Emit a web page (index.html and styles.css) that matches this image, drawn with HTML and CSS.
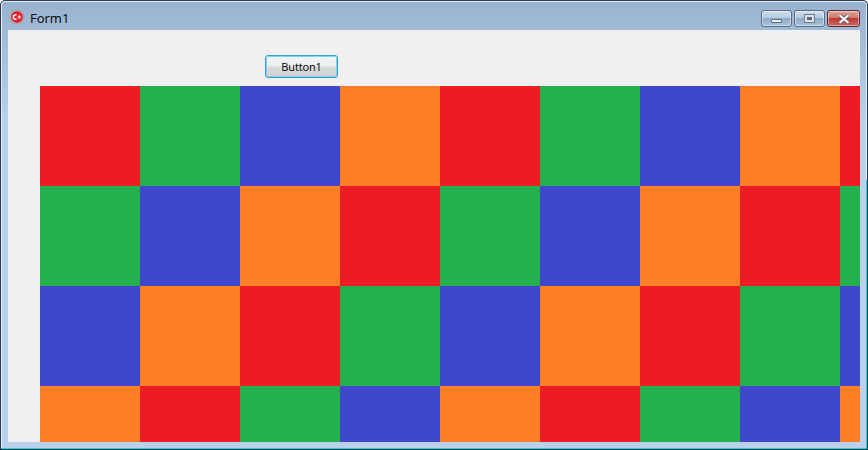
FILE: index.html
```html
<!DOCTYPE html>
<html lang="en">
<head>
<meta charset="utf-8">
<title>Form1</title>
<link rel="stylesheet" href="styles.css">
</head>
<body>
<div class="window">
  <header class="titlebar">
    <svg class="app-icon" width="16" height="16" viewBox="0 0 16 16">
      <circle cx="8" cy="8" r="7.5" fill="#a9a4ab"/>
      <circle cx="8" cy="8" r="5.8" fill="#e81c2c"/>
      <path d="M7.6 5.9A2.3 2.3 0 1 0 7.6 10.1" fill="none" stroke="#fff" stroke-width="1.5"/>
      <path d="M8.6 8h3.6M10.4 6.3v3.4" stroke="#fff" stroke-width="1.1"/>
    </svg>
    <span class="title">Form1</span>
    <div class="controls">
      <div class="ctl ctl-min"><span class="min-glyph"></span></div>
      <div class="ctl ctl-max"><span class="max-glyph"></span></div>
      <div class="ctl ctl-close">
        <svg width="12" height="10" viewBox="0 0 12 10">
          <path d="M1.5 1.2L10.5 8.8M10.5 1.2L1.5 8.8" fill="none" stroke="#4b4550" stroke-width="3.6"/>
          <path d="M1.5 1.2L10.5 8.8M10.5 1.2L1.5 8.8" fill="none" stroke="#f1eff0" stroke-width="2.4"/>
        </svg>
      </div>
    </div>
  </header>
  <main class="client">
    <div class="toolbar"><button class="btn" type="button">Button1</button></div>
    <div class="board">
      <i class="r"></i><i class="g"></i><i class="b"></i><i class="o"></i><i class="r"></i><i class="g"></i><i class="b"></i><i class="o"></i><i class="r"></i>
      <i class="g"></i><i class="b"></i><i class="o"></i><i class="r"></i><i class="g"></i><i class="b"></i><i class="o"></i><i class="r"></i><i class="g"></i>
      <i class="b"></i><i class="o"></i><i class="r"></i><i class="g"></i><i class="b"></i><i class="o"></i><i class="r"></i><i class="g"></i><i class="b"></i>
      <i class="o"></i><i class="r"></i><i class="g"></i><i class="b"></i><i class="o"></i><i class="r"></i><i class="g"></i><i class="b"></i><i class="o"></i>
    </div>
  </main>
</div>
</body>
</html>
```
FILE: styles.css
```css
html, body { margin: 0; height: 100%; background: #fff; overflow: hidden; }
.window {
  box-sizing: border-box;
  width: 868px;
  height: 450px;
  display: flex;
  flex-direction: column;
  border: 1px solid #2b3a44;
  border-bottom-color: #22303a;
  border-radius: 5px 5px 0 0;
  background: linear-gradient(#98b3d0 0, #b9d1ea 120px, #b9d1ea 100%);
  box-shadow: inset 0 0 0 1px #e4eef7;
  padding: 0 7px 7px 7px;
  position: relative;
}
.window::after {
  content: "";
  position: absolute;
  left: 0; right: 0; bottom: 0;
  height: 1px;
  background: #1fd3e6;
}
.window::before {
  content: "";
  position: absolute;
  top: 40%; right: 0; bottom: 0;
  width: 1px;
  background: #1fd3e6;
}
.titlebar {
  height: 29px;
  flex: none;
  display: flex;
  align-items: center;
  font: 13px "Open Sans", "Noto Sans", sans-serif;
  color: #000;
}
.app-icon { margin: 3px 5px 0 1px; }
.title { padding-top: 4px; }
.controls { margin-left: auto; display: flex; gap: 2px; align-self: flex-start; padding-top: 9px; }
.ctl {
  box-sizing: border-box;
  width: 31px;
  height: 17px;
  border: 1px solid #5a6c84;
  border-radius: 3px;
  display: flex;
  align-items: center;
  justify-content: center;
  background: linear-gradient(#cfdeee 0, #b3cadf 45%, #8dacc8 50%, #a9c4da 100%);
  box-shadow: inset 0 0 0 1px rgba(255,255,255,.45);
}
.ctl-close {
  width: 33px;
  border-color: #5b2430;
  background: linear-gradient(#e0a79e 0, #d07a70 45%, #bd3b33 50%, #c9675c 100%);
}
.min-glyph {
  width: 11px; height: 4px; margin-top: 5px;
  box-sizing: border-box;
  background: #eef1f5;
  border: 1px solid #566a84;
  border-radius: 1px;
}
.max-glyph {
  box-sizing: border-box;
  width: 9px; height: 7px;
  background: #56687f;
  border: 2px solid #dfe4ea;
  box-shadow: 0 0 0 1px #6d7c90;
}
.client {
  flex: 1;
  min-height: 0;
  display: flex;
  flex-direction: column;
  background: #f0f0f0;
  overflow: hidden;
}
.toolbar {
  height: 56px;
  flex: none;
  box-sizing: border-box;
  padding: 25px 0 0 257px;
}
.btn {
  display: block;
  box-sizing: border-box;
  width: 73px;
  height: 23px;
  padding: 0;
  border: 1px solid #2f9fd4;
  outline: 1px solid #7fd3f0;
  outline-offset: -2px;
  border-radius: 3px;
  background: linear-gradient(#f3f6f6 0, #ebeeee 48%, #dadcdc 52%, #cfd1d1 100%);
  font: 11px "Open Sans", "Noto Sans", sans-serif;
  letter-spacing: -0.15px;
  color: #000;
}
.board {
  margin-left: 32px;
  display: grid;
  grid-template-columns: repeat(9, 100px);
  grid-auto-rows: 100px;
  width: 820px;
  height: 356px;
  overflow: hidden;
}
.board i { display: block; }
.r { background: #ed1c24; }
.g { background: #22b14c; }
.b { background: #3f48cc; }
.o { background: #ff7f27; }
```
